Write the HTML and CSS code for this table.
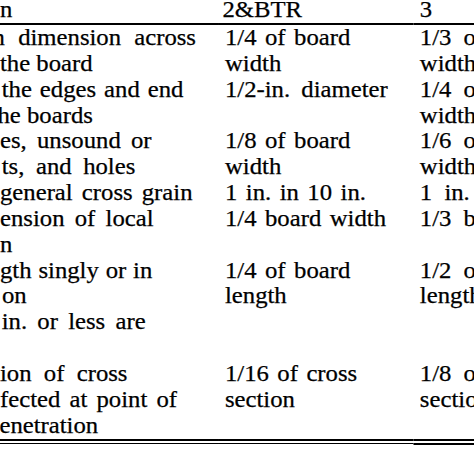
FILE: index.html
```html
<!DOCTYPE html>
<html lang="en">
<head>
<meta charset="utf-8">
<title>Grade limits</title>
<link rel="stylesheet" href="styles.css">
</head>
<body>
<div class="sheet">
<table class="grade">
<colgroup><col class="c1"><col class="c2"><col class="c3"></colgroup>
<thead>
<tr>
<th><div class="ln">n</div></th>
<th><div class="cell hd2">2&amp;BTR</div></th>
<th><div class="cell">3</div></th>
</tr>
</thead>
<tbody>
<tr>
<td><div class="ln ws6 in-n">n dimension across</div><div class="ln">the board</div></td>
<td><div class="cell">1/4 of board<br>width</div></td>
<td><div class="cell wide">1/3 of board<br>width</div></td>
</tr>
<tr>
<td><div class="ln ws1 in-a">the edges and end</div><div class="ln in-b">he boards</div></td>
<td><div class="cell dia">1/2-in. diameter</div></td>
<td><div class="cell wide">1/4 of board<br>width</div></td>
</tr>
<tr>
<td><div class="ln ws3">es, unsound or</div><div class="ln ws4 in-a">ts, and holes</div></td>
<td><div class="cell">1/8 of board<br>width</div></td>
<td><div class="cell wide">1/6 of board<br>width</div></td>
</tr>
<tr>
<td><div class="ln ws2">general cross grain</div></td>
<td><div class="cell">1 in. in 10 in.</div></td>
<td><div class="cell wide">1 in. in 8 in.</div></td>
</tr>
<tr>
<td><div class="ln ws3">ension of local</div><div class="ln">n</div></td>
<td><div class="cell">1/4 board width</div></td>
<td><div class="cell wide">1/3 board width</div></td>
</tr>
<tr>
<td><div class="ln ws0">gth singly or in</div><div class="ln in-c">on</div><div class="ln ws3 in-a">in. or less are</div><div class="ln">&nbsp;</div></td>
<td><div class="cell">1/4 of board<br>length</div></td>
<td><div class="cell wide">1/2 of board<br>length</div></td>
</tr>
<tr class="last">
<td><div class="ln ws5">ion of cross</div><div class="ln ws2">fected at point of</div><div class="ln in-d">enetration</div></td>
<td><div class="cell">1/16 of cross<br>section</div></td>
<td><div class="cell wide">1/8 of cross<br>section</div></td>
</tr>
<tr class="foot">
<td><div class="rule"></div></td>
<td><div class="rule"></div></td>
<td><div class="rule thick"></div></td>
</tr>
</tbody>
</table>
</div>
</body>
</html>
```
FILE: styles.css
```css
html, body {
  margin: 0;
  padding: 0;
  width: 474px;
  height: 474px;
  overflow: hidden;
  background: #ffffff;
}

.sheet {
  width: 441.3px;
  margin-top: -3.4px;
  transform: scaleX(1.074);
  transform-origin: 0 0;
}

.grade {
  border-collapse: separate;
  border-spacing: 0;
  table-layout: fixed;
  width: 460px;
  font-family: "Liberation Serif", "Times New Roman", serif;
  font-size: 23px;
  line-height: 25.85px;
  color: #000000;
  -webkit-text-stroke: 0.25px #000000;
}

.c1 { width: 203.07px; }
.c2 { width: 181.47px; }
.c3 { width: 75.46px; }

.grade th,
.grade td {
  padding: 0;
  vertical-align: top;
  text-align: left;
  font-weight: normal;
  white-space: nowrap;
}

.grade th {
  padding-bottom: 0.6px;
  border-bottom: 2px solid #000000;
}

.grade tr.last td {
  border-bottom: 2px solid #000000;
}

.ln { display: block; }

.cell {
  padding-left: 6.42px;
  word-spacing: 2.14px;
}
.cell.hd2 { text-indent: -2.32px; }
.cell.dia { word-spacing: 4.66px; }
.cell.wide { word-spacing: 5.57px; }

.ws0 { word-spacing: 0.64px; }
.ws1 { word-spacing: 1.68px; }
.ws2 { word-spacing: 2.78px; }
.ws3 { word-spacing: 3.8px; }
.ws4 { word-spacing: 5.03px; }
.ws5 { word-spacing: 5.68px; }
.ws6 { word-spacing: 6.52px; }

.in-n { text-indent: -6.89px; }
.in-a { text-indent: 1.58px; }
.in-b { text-indent: -2.32px; }
.in-c { text-indent: 1.86px; }
.in-d { text-indent: -0.54px; }

.grade tr.foot td {
  line-height: 0;
  font-size: 0;
}

.rule {
  height: 2px;
  border-bottom: 1px solid #000000;
}
.rule.thick {
  border-bottom-width: 2px;
}
```
